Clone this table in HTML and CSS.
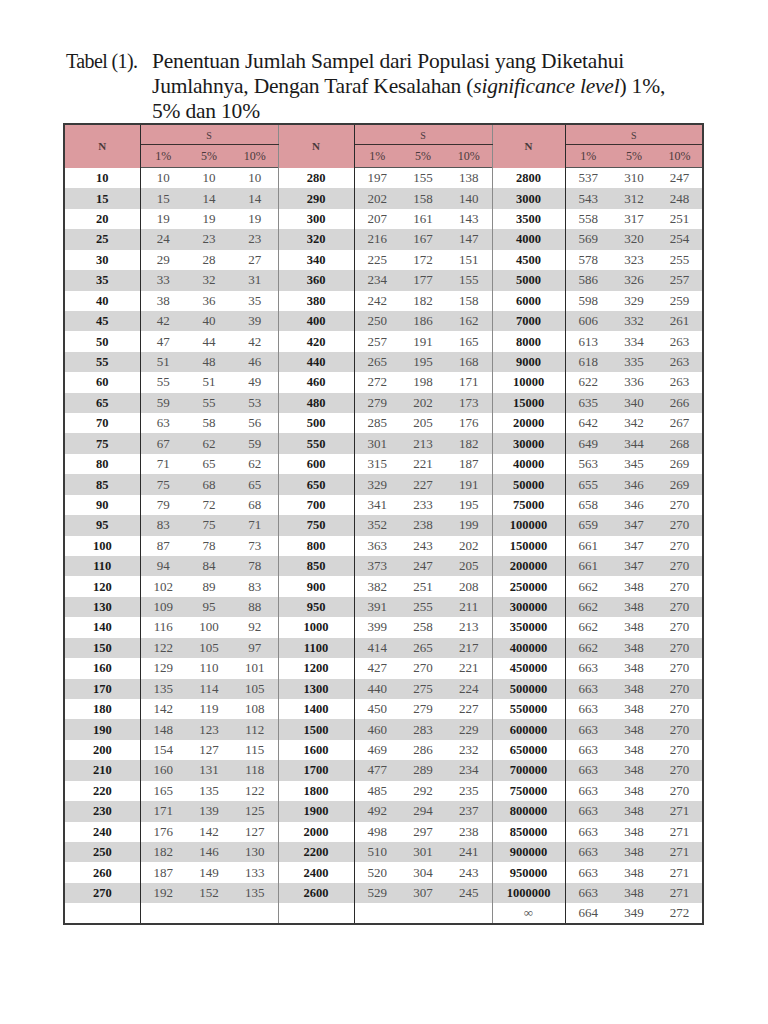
FILE: index.html
```html
<!DOCTYPE html>
<html>
<head>
<meta charset="utf-8">
<link rel="stylesheet" href="styles.css">
</head>
<body>
<div class="page">
  <div class="title">
    <div class="label">Tabel (1).</div>
    <div class="text">Penentuan Jumlah Sampel dari Populasi yang Diketahui<br>Jumlahnya, Dengan Taraf Kesalahan (<i>significance level</i>) 1%,<br><span class="out">5% dan 10%</span></div>
  </div>
  <table class="tbl">
    <colgroup>
      <col class="cn"><col class="cs"><col class="cs"><col class="cs">
      <col class="cn"><col class="cs"><col class="cs"><col class="cs">
      <col class="cn3"><col class="cs"><col class="cs"><col class="cs">
    </colgroup>
    <thead>
      <tr class="h1">
        <th rowspan="2" class="n">N</th><th colspan="3" class="s">S</th>
        <th rowspan="2" class="n g">N</th><th colspan="3" class="s">S</th>
        <th rowspan="2" class="n g">N</th><th colspan="3" class="s">S</th>
      </tr>
      <tr class="h2">
        <th class="p first">1%</th><th class="p">5%</th><th class="p">10%</th>
        <th class="p first">1%</th><th class="p">5%</th><th class="p">10%</th>
        <th class="p first">1%</th><th class="p">5%</th><th class="p">10%</th>
      </tr>
    </thead>
    <tbody>
<tr><td class="n">10</td><td class="v first">10</td><td class="v">10</td><td class="v">10</td><td class="n g">280</td><td class="v first">197</td><td class="v">155</td><td class="v">138</td><td class="n g">2800</td><td class="v first">537</td><td class="v">310</td><td class="v">247</td></tr>
<tr><td class="n">15</td><td class="v first">15</td><td class="v">14</td><td class="v">14</td><td class="n g">290</td><td class="v first">202</td><td class="v">158</td><td class="v">140</td><td class="n g">3000</td><td class="v first">543</td><td class="v">312</td><td class="v">248</td></tr>
<tr><td class="n">20</td><td class="v first">19</td><td class="v">19</td><td class="v">19</td><td class="n g">300</td><td class="v first">207</td><td class="v">161</td><td class="v">143</td><td class="n g">3500</td><td class="v first">558</td><td class="v">317</td><td class="v">251</td></tr>
<tr><td class="n">25</td><td class="v first">24</td><td class="v">23</td><td class="v">23</td><td class="n g">320</td><td class="v first">216</td><td class="v">167</td><td class="v">147</td><td class="n g">4000</td><td class="v first">569</td><td class="v">320</td><td class="v">254</td></tr>
<tr><td class="n">30</td><td class="v first">29</td><td class="v">28</td><td class="v">27</td><td class="n g">340</td><td class="v first">225</td><td class="v">172</td><td class="v">151</td><td class="n g">4500</td><td class="v first">578</td><td class="v">323</td><td class="v">255</td></tr>
<tr><td class="n">35</td><td class="v first">33</td><td class="v">32</td><td class="v">31</td><td class="n g">360</td><td class="v first">234</td><td class="v">177</td><td class="v">155</td><td class="n g">5000</td><td class="v first">586</td><td class="v">326</td><td class="v">257</td></tr>
<tr><td class="n">40</td><td class="v first">38</td><td class="v">36</td><td class="v">35</td><td class="n g">380</td><td class="v first">242</td><td class="v">182</td><td class="v">158</td><td class="n g">6000</td><td class="v first">598</td><td class="v">329</td><td class="v">259</td></tr>
<tr><td class="n">45</td><td class="v first">42</td><td class="v">40</td><td class="v">39</td><td class="n g">400</td><td class="v first">250</td><td class="v">186</td><td class="v">162</td><td class="n g">7000</td><td class="v first">606</td><td class="v">332</td><td class="v">261</td></tr>
<tr><td class="n">50</td><td class="v first">47</td><td class="v">44</td><td class="v">42</td><td class="n g">420</td><td class="v first">257</td><td class="v">191</td><td class="v">165</td><td class="n g">8000</td><td class="v first">613</td><td class="v">334</td><td class="v">263</td></tr>
<tr><td class="n">55</td><td class="v first">51</td><td class="v">48</td><td class="v">46</td><td class="n g">440</td><td class="v first">265</td><td class="v">195</td><td class="v">168</td><td class="n g">9000</td><td class="v first">618</td><td class="v">335</td><td class="v">263</td></tr>
<tr><td class="n">60</td><td class="v first">55</td><td class="v">51</td><td class="v">49</td><td class="n g">460</td><td class="v first">272</td><td class="v">198</td><td class="v">171</td><td class="n g">10000</td><td class="v first">622</td><td class="v">336</td><td class="v">263</td></tr>
<tr><td class="n">65</td><td class="v first">59</td><td class="v">55</td><td class="v">53</td><td class="n g">480</td><td class="v first">279</td><td class="v">202</td><td class="v">173</td><td class="n g">15000</td><td class="v first">635</td><td class="v">340</td><td class="v">266</td></tr>
<tr><td class="n">70</td><td class="v first">63</td><td class="v">58</td><td class="v">56</td><td class="n g">500</td><td class="v first">285</td><td class="v">205</td><td class="v">176</td><td class="n g">20000</td><td class="v first">642</td><td class="v">342</td><td class="v">267</td></tr>
<tr><td class="n">75</td><td class="v first">67</td><td class="v">62</td><td class="v">59</td><td class="n g">550</td><td class="v first">301</td><td class="v">213</td><td class="v">182</td><td class="n g">30000</td><td class="v first">649</td><td class="v">344</td><td class="v">268</td></tr>
<tr><td class="n">80</td><td class="v first">71</td><td class="v">65</td><td class="v">62</td><td class="n g">600</td><td class="v first">315</td><td class="v">221</td><td class="v">187</td><td class="n g">40000</td><td class="v first">563</td><td class="v">345</td><td class="v">269</td></tr>
<tr><td class="n">85</td><td class="v first">75</td><td class="v">68</td><td class="v">65</td><td class="n g">650</td><td class="v first">329</td><td class="v">227</td><td class="v">191</td><td class="n g">50000</td><td class="v first">655</td><td class="v">346</td><td class="v">269</td></tr>
<tr><td class="n">90</td><td class="v first">79</td><td class="v">72</td><td class="v">68</td><td class="n g">700</td><td class="v first">341</td><td class="v">233</td><td class="v">195</td><td class="n g">75000</td><td class="v first">658</td><td class="v">346</td><td class="v">270</td></tr>
<tr><td class="n">95</td><td class="v first">83</td><td class="v">75</td><td class="v">71</td><td class="n g">750</td><td class="v first">352</td><td class="v">238</td><td class="v">199</td><td class="n g">100000</td><td class="v first">659</td><td class="v">347</td><td class="v">270</td></tr>
<tr><td class="n">100</td><td class="v first">87</td><td class="v">78</td><td class="v">73</td><td class="n g">800</td><td class="v first">363</td><td class="v">243</td><td class="v">202</td><td class="n g">150000</td><td class="v first">661</td><td class="v">347</td><td class="v">270</td></tr>
<tr><td class="n">110</td><td class="v first">94</td><td class="v">84</td><td class="v">78</td><td class="n g">850</td><td class="v first">373</td><td class="v">247</td><td class="v">205</td><td class="n g">200000</td><td class="v first">661</td><td class="v">347</td><td class="v">270</td></tr>
<tr><td class="n">120</td><td class="v first">102</td><td class="v">89</td><td class="v">83</td><td class="n g">900</td><td class="v first">382</td><td class="v">251</td><td class="v">208</td><td class="n g">250000</td><td class="v first">662</td><td class="v">348</td><td class="v">270</td></tr>
<tr><td class="n">130</td><td class="v first">109</td><td class="v">95</td><td class="v">88</td><td class="n g">950</td><td class="v first">391</td><td class="v">255</td><td class="v">211</td><td class="n g">300000</td><td class="v first">662</td><td class="v">348</td><td class="v">270</td></tr>
<tr><td class="n">140</td><td class="v first">116</td><td class="v">100</td><td class="v">92</td><td class="n g">1000</td><td class="v first">399</td><td class="v">258</td><td class="v">213</td><td class="n g">350000</td><td class="v first">662</td><td class="v">348</td><td class="v">270</td></tr>
<tr><td class="n">150</td><td class="v first">122</td><td class="v">105</td><td class="v">97</td><td class="n g">1100</td><td class="v first">414</td><td class="v">265</td><td class="v">217</td><td class="n g">400000</td><td class="v first">662</td><td class="v">348</td><td class="v">270</td></tr>
<tr><td class="n">160</td><td class="v first">129</td><td class="v">110</td><td class="v">101</td><td class="n g">1200</td><td class="v first">427</td><td class="v">270</td><td class="v">221</td><td class="n g">450000</td><td class="v first">663</td><td class="v">348</td><td class="v">270</td></tr>
<tr><td class="n">170</td><td class="v first">135</td><td class="v">114</td><td class="v">105</td><td class="n g">1300</td><td class="v first">440</td><td class="v">275</td><td class="v">224</td><td class="n g">500000</td><td class="v first">663</td><td class="v">348</td><td class="v">270</td></tr>
<tr><td class="n">180</td><td class="v first">142</td><td class="v">119</td><td class="v">108</td><td class="n g">1400</td><td class="v first">450</td><td class="v">279</td><td class="v">227</td><td class="n g">550000</td><td class="v first">663</td><td class="v">348</td><td class="v">270</td></tr>
<tr><td class="n">190</td><td class="v first">148</td><td class="v">123</td><td class="v">112</td><td class="n g">1500</td><td class="v first">460</td><td class="v">283</td><td class="v">229</td><td class="n g">600000</td><td class="v first">663</td><td class="v">348</td><td class="v">270</td></tr>
<tr><td class="n">200</td><td class="v first">154</td><td class="v">127</td><td class="v">115</td><td class="n g">1600</td><td class="v first">469</td><td class="v">286</td><td class="v">232</td><td class="n g">650000</td><td class="v first">663</td><td class="v">348</td><td class="v">270</td></tr>
<tr><td class="n">210</td><td class="v first">160</td><td class="v">131</td><td class="v">118</td><td class="n g">1700</td><td class="v first">477</td><td class="v">289</td><td class="v">234</td><td class="n g">700000</td><td class="v first">663</td><td class="v">348</td><td class="v">270</td></tr>
<tr><td class="n">220</td><td class="v first">165</td><td class="v">135</td><td class="v">122</td><td class="n g">1800</td><td class="v first">485</td><td class="v">292</td><td class="v">235</td><td class="n g">750000</td><td class="v first">663</td><td class="v">348</td><td class="v">270</td></tr>
<tr><td class="n">230</td><td class="v first">171</td><td class="v">139</td><td class="v">125</td><td class="n g">1900</td><td class="v first">492</td><td class="v">294</td><td class="v">237</td><td class="n g">800000</td><td class="v first">663</td><td class="v">348</td><td class="v">271</td></tr>
<tr><td class="n">240</td><td class="v first">176</td><td class="v">142</td><td class="v">127</td><td class="n g">2000</td><td class="v first">498</td><td class="v">297</td><td class="v">238</td><td class="n g">850000</td><td class="v first">663</td><td class="v">348</td><td class="v">271</td></tr>
<tr><td class="n">250</td><td class="v first">182</td><td class="v">146</td><td class="v">130</td><td class="n g">2200</td><td class="v first">510</td><td class="v">301</td><td class="v">241</td><td class="n g">900000</td><td class="v first">663</td><td class="v">348</td><td class="v">271</td></tr>
<tr><td class="n">260</td><td class="v first">187</td><td class="v">149</td><td class="v">133</td><td class="n g">2400</td><td class="v first">520</td><td class="v">304</td><td class="v">243</td><td class="n g">950000</td><td class="v first">663</td><td class="v">348</td><td class="v">271</td></tr>
<tr><td class="n">270</td><td class="v first">192</td><td class="v">152</td><td class="v">135</td><td class="n g">2600</td><td class="v first">529</td><td class="v">307</td><td class="v">245</td><td class="n g">1000000</td><td class="v first">663</td><td class="v">348</td><td class="v">271</td></tr>
<tr class="last"><td class="n"></td><td class="v first"></td><td class="v"></td><td class="v"></td><td class="n g"></td><td class="v first"></td><td class="v"></td><td class="v"></td><td class="n g inf">∞</td><td class="v first">664</td><td class="v">349</td><td class="v">272</td></tr>
    </tbody>
  </table>
</div>
</body>
</html>
```
FILE: styles.css
```css
html, body {
  margin: 0;
  padding: 0;
  background: #ffffff;
}
.page {
  padding-top: 49px;
  padding-left: 63px;
  font-family: "Liberation Serif", "Times New Roman", serif;
  color: #222;
}
.title {
  display: flex;
  line-height: 25px;
  margin-left: 3px;
  color: #1a1a1a;
}
.title .label {
  width: 86px;
  flex: none;
  font-size: 20px;
  letter-spacing: -0.6px;
}
.title .text {
  white-space: nowrap;
  font-size: 21.5px;
  letter-spacing: -0.2px;
}
.tbl {
  border-collapse: collapse;
  table-layout: fixed;
  width: 641px;
  margin-top: -1px;
  border: 2px solid #3a3a3a;
  font-size: 13px;
}
.tbl col.cn { width: 76px; }
.tbl col.cn3 { width: 73px; }
.tbl col.cs { width: 46px; }
.tbl th, .tbl td {
  padding: 0;
  text-align: center;
  font-weight: normal;
}
.tbl thead th {
  background: #dc9b9f;
  color: #4a3a3c;
}
.tbl .h1 th { height: 19px; font-size: 10px; }
.tbl .h1 th.s { border-bottom: 1px solid #3a3030; vertical-align: bottom; line-height: 16px; }
.tbl .h1 th.n { font-size: 11px; font-weight: bold; border-right: 1px solid #2a2a2a; }
.tbl .h1 th.n.g { border-left: 1px solid #8a8a8a; }
.tbl .h2 th { height: 22px; font-size: 12px; border-bottom: 1px solid #555; }
.tbl td {
  height: 20.43px;
  line-height: 16px;
  color: #505050;
}
.tbl tbody tr:nth-child(even) td { background: #d6d6d6; }
.tbl td.n {
  font-weight: bold;
  color: #1a1a1a;
  font-size: 12.5px;
  border-right: 1px solid #2a2a2a;
}
.tbl td.n.g { border-left: 1px solid #8a8a8a; }
.tbl td.n.inf { font-weight: normal; color: #555; font-size: 13px; }
.tbl tbody tr.last td { height: 20px; }
```
